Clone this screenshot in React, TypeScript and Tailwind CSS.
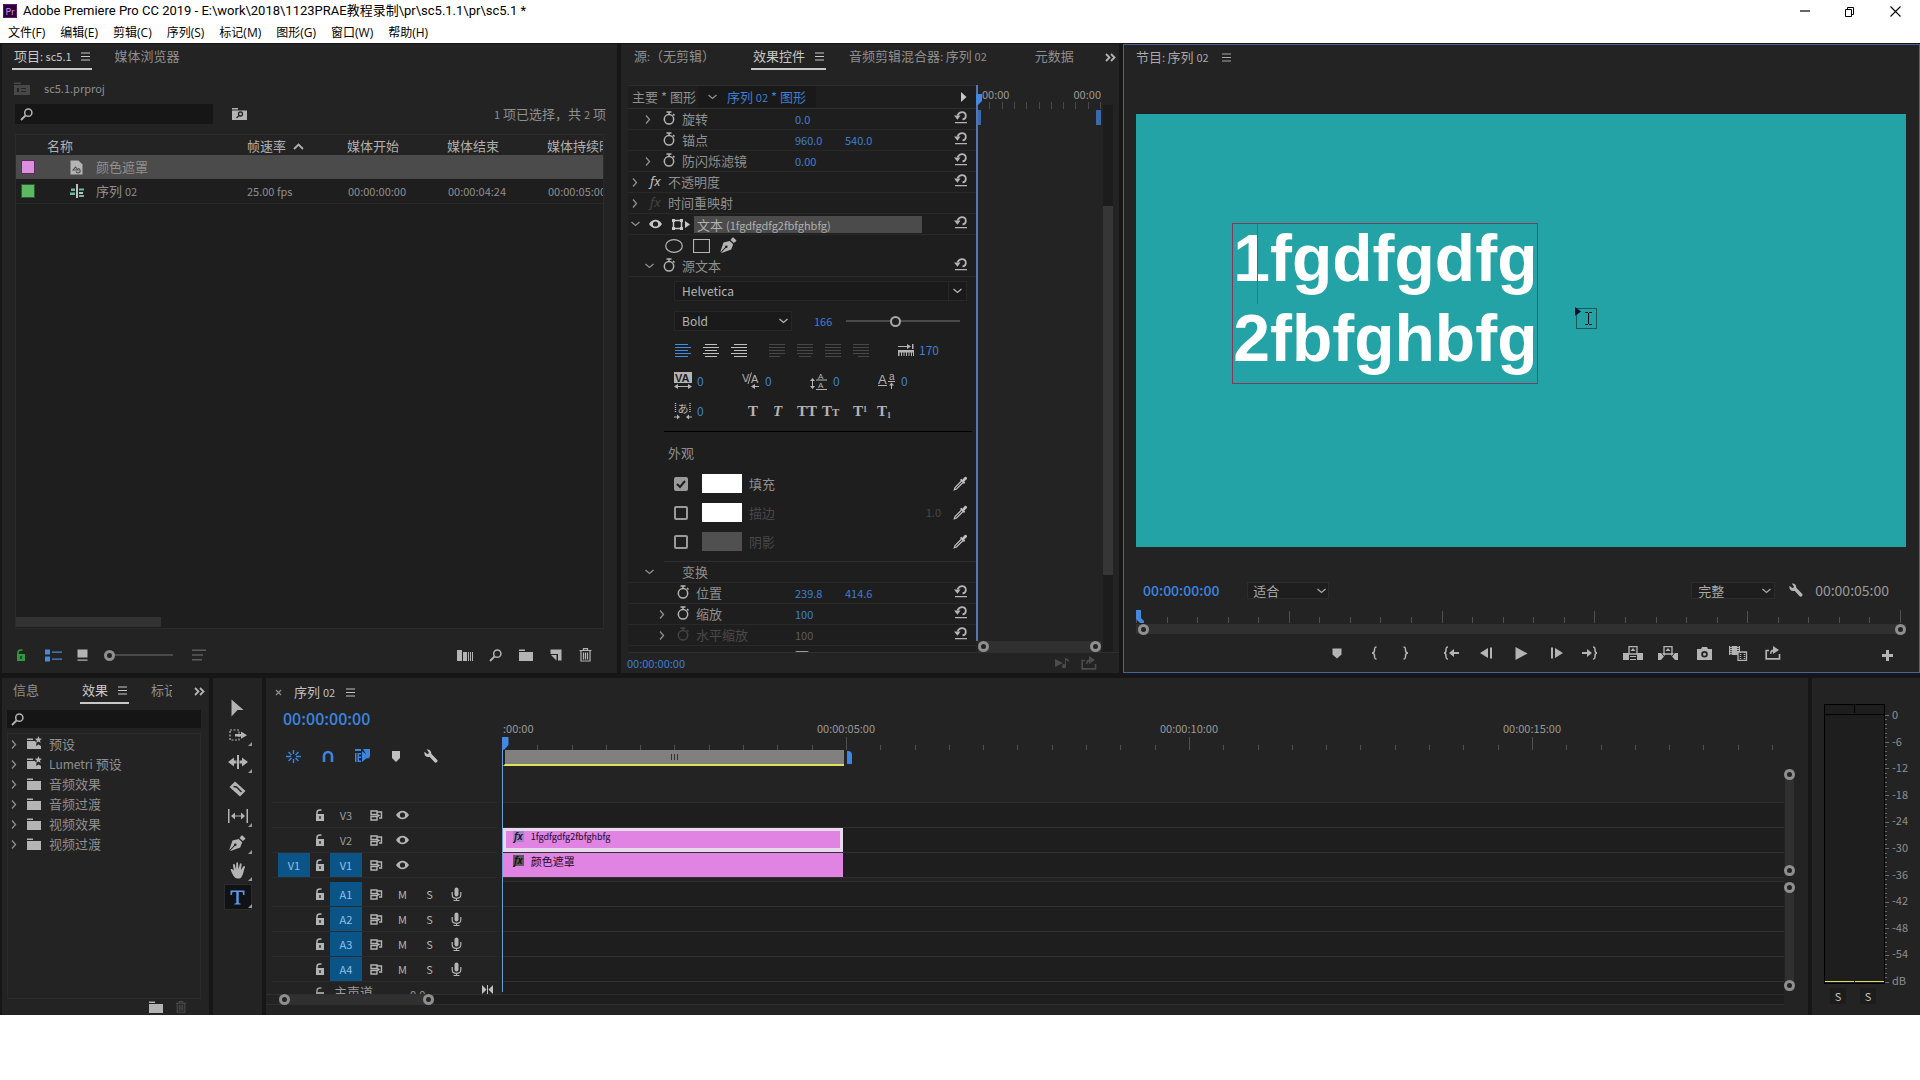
import React from "react";

type P = { className?: string };

/* ---------- icons ---------- */

const Svg = ({
  w,
  h,
  className = "",
  children,
  line,
}: {
  w: number;
  h: number;
  className?: string;
  children: React.ReactNode;
  line?: boolean;
}) => (
  <svg
    width={w}
    height={h}
    viewBox={`0 0 ${w} ${h}`}
    className={"shrink-0 " + className}
    fill={line ? "none" : "currentColor"}
    stroke={line ? "currentColor" : "none"}
    strokeWidth={1.5}
    aria-hidden="true"
  >
    {children}
  </svg>
);

const MenuLines = ({ className = "" }: P) => (
  <Svg w={9} h={9} className={className}>
    <path d="M0 0.5h9v1H0zM0 4h9v1H0zM0 7.5h9v1H0z" />
  </Svg>
);
const More = ({ className = "" }: P) => (
  <Svg w={11} h={9} line className={className}>
    <path d="M1 1l3.5 3.5L1 8M6 1l3.5 3.5L6 8" strokeWidth={1.8} />
  </Svg>
);
const Magnifier = ({ className = "" }: P) => (
  <Svg w={13} h={13} line className={className}>
    <circle cx="8.3" cy="4.7" r="3.6" />
    <path d="M5.5 7.5L1 12" strokeWidth={1.8} />
  </Svg>
);
const Folder = ({ className = "" }: P) => (
  <Svg w={14} h={12} className={className}>
    <path d="M0 0.5h6v1.5H0zM0 3h14v9H0z" />
  </Svg>
);
const FolderStar = ({ className = "" }: P) => (
  <Svg w={15} h={14} className={className}>
    <path d="M0 2.5h6V4H0zM0 5h8l1.5 2L9 10l2.6-1.6L14 10v3H0z" />
    <path d="M11.4 0l1 2.6 2.6.1-2.1 1.7.8 2.6-2.3-1.5L9.1 7l.8-2.6-2.1-1.7 2.7-.1z" />
  </Svg>
);
const ProjectFolder = ({ className = "" }: P) => (
  <Svg w={16} h={13} className={className}>
    <path d="M0 0.5h7V2H0z" />
    <path fillRule="evenodd" d="M0 3h16v10H0zM3 6v4h2V6zm4 0v1h5V6zm0 3v1h5V9z" />
  </Svg>
);
const FolderSearch = ({ className = "" }: P) => (
  <Svg w={15} h={12} className={className}>
    <path d="M0 0h6v1.5H0z" />
    <path d="M0 2.5h15V12H0z" />
    <circle cx="8.5" cy="6" r="2" fill="none" stroke="#232323" strokeWidth="1.3" />
    <path d="M7 7.5L4.5 10" stroke="#232323" strokeWidth="1.3" />
  </Svg>
);
const Right = ({ className = "" }: P) => (
  <Svg w={6} h={9} line className={className}>
    <path d="M1 0.5l3.5 4L1 8.5" strokeWidth={1.3} />
  </Svg>
);
const Down = ({ className = "" }: P) => (
  <Svg w={9} h={6} line className={className}>
    <path d="M0.5 1l4 3.5L8.5 1" strokeWidth={1.3} />
  </Svg>
);
const Lock = ({ className = "" }: P) => (
  <Svg w={9} h={12} className={className}>
    <path fillRule="evenodd" d="M1 5h8v7H1zM4.3 7v3h1.4V7z" />
    <path d="M2 6V3.5C2 1.5 3.5 1 5 1h1.5" fill="none" stroke="currentColor" strokeWidth="1.5" />
  </Svg>
);
const Stopwatch = ({ className = "" }: P) => (
  <Svg w={12} h={14} line className={className}>
    <circle cx="6" cy="8.3" r="4.7" />
    <path d="M3.5 1h5M6 1v2.5M10 3l1.5 1.5" />
  </Svg>
);
const ResetIcon = ({ className = "" }: P) => (
  <Svg w={13} h={13} className={className}>
    <path d="M3.5 4.5C4.500 2.200 6 1.200 8 1.200c2.300 0 3.800 1.600 3.800 3.700 0 2-1.300 3.300-3.300 3.500" fill="none" stroke="currentColor" strokeWidth="1.8" />
    <path d="M0 4.500h6.500L3.500 8.800zM1 11h12v1.200H1z" />
  </Svg>
);
const Eye = ({ className = "" }: P) => (
  <Svg w={13} h={10} className={className}>
    <path fillRule="evenodd" d="M0 5C2 1.8 4.2.7 6.5.7S11 1.8 13 5c-2 3.2-4.2 4.3-6.5 4.3S2 8.2 0 5zm6.5-2.6a2.6 2.6 0 100 5.2 2.6 2.6 0 000-5.2z" />
  </Svg>
);
const Sync = ({ className = "" }: P) => (
  <Svg w={13} h={11} line className={className}>
    <path d="M1 1h6v3.5H1zM1 6.500h6V10H1zM7 2h4.500v6H9M7 4.500l2 1-2 1" strokeWidth={1.4} />
  </Svg>
);
const Mic = ({ className = "" }: P) => (
  <Svg w={11} h={15} className={className}>
    <rect x="3.5" y="0.5" width="4" height="9" rx="2" />
    <path d="M1.2 5v3c0 2.2 1.8 3.3 4.3 3.3S9.8 10.2 9.8 8V5" fill="none" stroke="currentColor" strokeWidth="1.2" />
    <path d="M5 11h1v2.5H5zM2.5 13h6v1h-6z" />
  </Svg>
);
const Wrench = ({ className = "" }: P) => (
  <Svg w={15} h={15} className={className}>
    <path d="M1.5 2.8l2.6 2.2 1.4-.3.3-1.5L3.7.6C6 .1 8.500 1.500 8.300 4.700L14.300 11c1 1.300-1 3.400-2.400 2.400L6.500 7.800C3.500 8.800.7 6.500 1.500 2.800z" />
  </Svg>
);
const Marker = ({ className = "" }: P) => (
  <Svg w={10} h={11} className={className}>
    <path d="M0.5 0.5h9v6L5 10.5 0.5 6.5z" />
  </Svg>
);
const Pen = ({ className = "" }: P) => (
  <Svg w={17} h={17} className={className}>
    <path d="M10.500 3l1.800-2.300c.4-.4 1-.4 1.400 0l2.300 2.200c.5.500.4 1 0 1.400L13.800 6z" />
    <path fillRule="evenodd" d="M9.700 4l3.500 3.300-2 5.200L1.500 16l-.3-.3 4.600-4.800a1.300 1.300 0 10-.7-.7L.7 14.900.4 14.600 3.500 5.500z" />
  </Svg>
);
const Trash = ({ className = "" }: P) => (
  <Svg w={13} h={14} line className={className}>
    <path d="M0.5 2.5h12M4.5 2V.7h4V2M2 3v10h9V3M4.5 4.5v7M6.5 4.5v7M8.5 4.5v7" strokeWidth={1.2} />
  </Svg>
);
const Dropper = ({ className = "" }: P) => (
  <Svg w={15} h={15} className={className}>
    <path d="M7 4l1.200-1.200 1.200.900L11.500 1.200c1.300-1.300 3.400.6 2.200 2.100L11.300 5.600l.9 1.200L11 8z" />
    <path d="M8.500 5L2 11.500 1.300 13.800 3.500 13 10 6.500" fill="none" stroke="currentColor" strokeWidth="1.2" />
  </Svg>
);
const Export = ({ className = "" }: P) => (
  <Svg w={16} h={14} className={className}>
    <path d="M4 4.5H1.2v8.300h13.300V8" fill="none" stroke="currentColor" strokeWidth="1.7" />
    <path d="M8 0l6 4-6 4zM5 8c0-3 1-4.500 3-4.500v2C6.500 5.500 6.500 7 6.500 8z" />
  </Svg>
);

const Knob = ({ className = "" }: P) => (
  <span className={"block size-[11px] shrink-0 rounded-full border-[3px] border-[#8f8f8f] bg-[#232323] " + className} />
);

const IconButton = ({ label, className = "", children }: { label: string; className?: string; children: React.ReactNode }) => (
  <button type="button" aria-label={label} className={"flex shrink-0 items-center justify-center " + className}>
    {children}
  </button>
);

/* ---------- window chrome ---------- */

const menus = ["文件(F)", "编辑(E)", "剪辑(C)", "序列(S)", "标记(M)", "图形(G)", "窗口(W)", "帮助(H)"];

function TitleBar() {
  return (
    <header className="bg-white text-black">
      <div className="flex h-[22px] items-center pl-[3px]">
        <span className="flex size-[14px] items-center justify-center border border-[#5b1a6b] bg-[#2a0034] text-[9px] leading-none text-[#d58bff]">Pr</span>
        <h1 className="ml-[6px] whitespace-nowrap font-['Roboto','Noto_Sans_CJK_SC',sans-serif] text-[13px] leading-[22px]">
          Adobe Premiere Pro CC 2019 - E:\work\2018\1123PRAE教程录制\pr\sc5.1.1\pr\sc5.1 *
        </h1>
        <div className="ml-auto flex">
          <IconButton label="最小化" className="h-[22px] w-[45px]">
            <Svg w={10} h={10} line><path d="M0 5h10" strokeWidth={1.2} /></Svg>
          </IconButton>
          <IconButton label="还原" className="h-[22px] w-[45px]">
            <Svg w={11} h={11} line><path d="M1.500 3.500h6v7h-6zM3.500 3V1.500h6v7H8" strokeWidth={1} /></Svg>
          </IconButton>
          <IconButton label="关闭" className="mr-[2px] h-[22px] w-[46px]">
            <Svg w={11} h={11} line><path d="M0.5 0.5l10 10M10.5 0.5l-10 10" strokeWidth={1.1} /></Svg>
          </IconButton>
        </div>
      </div>
      <nav className="flex h-[21px] gap-[15px] pl-[8px] font-['Open_Sans','Noto_Sans_CJK_SC',sans-serif] text-[12px] leading-[20px]">
        {menus.map((m) => (
          <button key={m} type="button" className="whitespace-nowrap">{m}</button>
        ))}
      </nav>
    </header>
  );
}

const Tab = ({ active, children, className = "" }: { active?: boolean; children: React.ReactNode; className?: string }) => (
  <button
    type="button"
    className={
      "flex h-[26px] shrink-0 items-center whitespace-nowrap border-b-2 text-[13px] " +
      (active ? "border-[#c8c8c8] text-[#c8c8c8] " : "border-transparent text-[#8f8f8f] ") +
      className
    }
  >
    {children}
  </button>
);
const Sm = ({ children }: { children: React.ReactNode }) => <span className="text-[11px]">{children}</span>;

/* ---------- project ---------- */

const th = "p-0 text-left font-normal whitespace-nowrap overflow-hidden";

function ProjectPanel() {
  return (
    <section className="flex min-w-0 flex-col bg-[#232323]">
      <div className="flex pl-[10px]">
        <Tab active className="px-[2px]">
          项目<Sm>: sc5.1</Sm>
          <MenuLines className="ml-[9px]" />
        </Tab>
        <Tab className="ml-[23px]">媒体浏览器</Tab>
      </div>
      <div className="mt-[8px] flex h-[20px] items-center pl-[12px]">
        <ProjectFolder className="text-[#484848]" />
        <span className="ml-[14px] text-[11px] text-[#8f8f8f]">sc5.1.prproj</span>
      </div>
      <div className="mt-[6px] flex h-[20px] items-center pr-[11px] pl-[13px]">
        <label className="flex h-[20px] w-[198px] items-center bg-[#161616] pl-[5px] text-[#b4b4b4]">
          <Magnifier />
          <input aria-label="搜索项目" className="ml-1 w-full bg-transparent text-[12px] outline-none" />
        </label>
        <IconButton label="从查询创建新的搜索素材箱" className="ml-[19px] text-[#b4b4b4]"><FolderSearch /></IconButton>
        <span className="ml-auto text-[13px] text-[#8f8f8f]"><Sm>1</Sm> 项已选择，共 <Sm>2</Sm> 项</span>
      </div>
      <div className="mx-[13px] mt-[10px] flex h-0 grow flex-col overflow-hidden border border-[#2b2b2b] bg-[#1e1e1e]">
        <table className="w-full table-fixed border-collapse">
          <colgroup>
            <col className="w-[31px]" />
            <col />
            <col className="w-[100px]" />
            <col className="w-[100px]" />
            <col className="w-[100px]" />
            <col className="w-[56px]" />
          </colgroup>
          <thead className="bg-[#232323] text-[13px] text-[#b0b0b0]">
            <tr className="h-[20px] leading-[19px]">
              <th className={th} />
              <th className={th}>名称</th>
              <th className={th}>
                帧速率
                <Svg w={11} h={7} line className="ml-[7px] inline"><path d="M1 6l4.5-4.5L10 6" strokeWidth={1.8} /></Svg>
              </th>
              <th className={th}>媒体开始</th>
              <th className={th}>媒体结束</th>
              <th className={th}>媒体持续时间</th>
            </tr>
          </thead>
          <tbody className="text-[11px] text-[#8f8f8f]">
            <tr className="h-[24px] bg-[#4b4b4b]">
              <td className="p-0 pl-[5px]"><span className="block size-[14px] border border-[#5c2a5c] bg-[#dc8fdd]" /></td>
              <td className="p-0">
                <span className="flex items-center pl-[23px] text-[13px]">
                  <Svg w={13} h={15} className="text-[#b4b4b4]">
                    <path d="M0.5 0.5h8l4 4v10h-12z" />
                    <path d="M3 10l2.5-3L8 10H3zM6 11.500a2 2 0 104-1.500 2 2 0 00-2-1.500" fill="none" stroke="#4b4b4b" strokeWidth="1.1" />
                  </Svg>
                  <span className="ml-[13px]">颜色遮罩</span>
                </span>
              </td>
              <td className="p-0" colSpan={4} />
            </tr>
            <tr className="h-[24px] border-b border-[#282828]">
              <td className="p-0 pl-[5px]"><span className="block size-[14px] border border-[#2c5a30] bg-[#5cb862]" /></td>
              <td className="p-0">
                <span className="flex items-center pl-[23px] text-[13px]">
                  <Svg w={14} h={14}>
                    <path d="M6 0h2v14H6z" fill="#c0c0c0" />
                    <path d="M1 4.500h4v2.500H1zM0 8.500h5v2.500H0z" fill="#6fb9a4" />
                    <path d="M9 4.500h5v2H9zM9 11h5v2H9z" fill="#6fb9a4" />
                    <path d="M9 8h4v2H9z" fill="#c0c0c0" />
                  </Svg>
                  <span className="ml-[12px]">序列 <Sm>02</Sm></span>
                </span>
              </td>
              <td className="p-0">25.00 fps</td>
              <td className="p-0 pl-px">00:00:00:00</td>
              <td className="p-0 pl-px">00:00:04:24</td>
              <td className="overflow-hidden p-0 pl-px">00:00:05:00</td>
            </tr>
          </tbody>
        </table>
        <div className="mt-auto mb-px h-[10px] w-[145px] bg-[#323232]" />
      </div>
      <div className="flex h-[44px] items-center pt-[8px] pr-[25px] pl-[14px] text-[#b4b4b4]">
        <IconButton label="锁定" className="text-[#2f9a3c]"><Lock /></IconButton>
        <IconButton label="列表视图" className="ml-[20px] text-[#4a88d8]">
          <Svg w={17} h={13}><path d="M0 0.5h5v5H0zM0 7.5h5v5H0zM7 2.5h10v1.2H7zM7 9.5h10v1.2H7z" /></Svg>
        </IconButton>
        <IconButton label="图标视图" className="ml-[15px]">
          <Svg w={11} h={12}><path d="M0.5 0.5h10v8h-10zM0.5 10.5h10v1.2h-10z" /></Svg>
        </IconButton>
        <input
          type="range"
          aria-label="缩放"
          defaultValue={0}
          className="ml-[16px] h-[12px] w-[69px] appearance-none bg-[linear-gradient(#4a4a4a,#4a4a4a)] bg-[length:100%_2px] bg-center bg-no-repeat [&::-webkit-slider-thumb]:size-[11px] [&::-webkit-slider-thumb]:appearance-none [&::-webkit-slider-thumb]:rounded-full [&::-webkit-slider-thumb]:border-[3px] [&::-webkit-slider-thumb]:border-solid [&::-webkit-slider-thumb]:border-[#8f8f8f] [&::-webkit-slider-thumb]:bg-[#232323]"
        />
        <IconButton label="排序图标" className="ml-[19px] text-[#5c5c5c]">
          <Svg w={14} h={12}><path d="M0 0.5h14V2H0zM0 5.2h11v1.5H0zM0 10h10v1.5H0z" /></Svg>
        </IconButton>
        <IconButton label="自动匹配序列" className="ml-auto">
          <Svg w={16} h={11}><path d="M0 0h5v11H0zM6 2h4v9H6zM11 2h1v9h-1zM13 2h1v9h-1zM15 2h1v9h-1z" /></Svg>
        </IconButton>
        <IconButton label="查找" className="ml-[16px]"><Magnifier /></IconButton>
        <IconButton label="新建素材箱" className="ml-[17px]"><Folder /></IconButton>
        <IconButton label="新建项" className="ml-[17px]">
          <Svg w={12} h={12}><path d="M0.5 0.5h11v11H8V5H0.5zM1 6h5.5v5.5z" /></Svg>
        </IconButton>
        <IconButton label="清除" className="ml-[17px]"><Trash /></IconButton>
      </div>
    </section>
  );
}

/* ---------- effect controls ---------- */

const hot = "w-[50px] shrink-0 text-left text-[11px] text-[#3f7fd0]";

function PropRow({
  level,
  chevron,
  label,
  values = [],
  dim,
}: {
  level: 2 | 3;
  chevron?: "r" | "d";
  label: string;
  values?: string[];
  dim?: boolean;
}) {
  const lead = level === 2 ? "w-[17px]" : "w-[31px]";
  return (
    <div className="flex h-[21px] shrink-0 items-center border-b border-[#292929] text-[13px] text-[#8f8f8f]">
      <div className="flex w-[167px] shrink-0 items-center whitespace-nowrap">
        <span className={"shrink-0 " + lead} />
        <span className="w-[18px] shrink-0">{chevron === "r" ? <Right /> : chevron === "d" ? <Down /> : null}</span>
        <Stopwatch className={"mb-[2px] " + (dim ? "text-[#444]" : "text-[#b4b4b4]")} />
        <span className={"ml-[7px] " + (dim ? "text-[#4a4a4a]" : "")}>{label}</span>
      </div>
      {values.map((v) => (
        <button key={v} type="button" className={dim ? "w-[50px] text-left text-[11px] text-[#5c5c5c]" : hot}>{v}</button>
      ))}
      <IconButton label={"重置" + label} className="mr-[9px] mb-[4px] ml-auto text-[#b4b4b4]"><ResetIcon /></IconButton>
    </div>
  );
}

const alignSets: { name: string; d: string; cls: string }[] = [
  { name: "左对齐", d: "M0 0h13v1H0zM0 3h16v1H0zM0 6h13v1H0zM0 9h16v1H0zM0 12h13v1H0z", cls: "text-[#3f8fe8]" },
  { name: "居中对齐", d: "M2 0h12v1H2zM0 3h16v1H0zM2 6h12v1H2zM0 9h16v1H0zM2 12h12v1H2z", cls: "text-[#c0c0c0] ml-[12px]" },
  { name: "右对齐", d: "M3 0h13v1H3zM0 3h16v1H0zM3 6h13v1H3zM0 9h16v1H0zM3 12h13v1H3z", cls: "text-[#c0c0c0] ml-[12px]" },
  { name: "最后一行左对齐", d: "M0 0h16v1H0zM0 3h16v1H0zM0 6h16v1H0zM0 9h16v1H0zM0 12h11v1H0z", cls: "text-[#484848] ml-[22px]" },
  { name: "最后一行居中对齐", d: "M0 0h16v1H0zM0 3h16v1H0zM0 6h16v1H0zM0 9h16v1H0zM2 12h12v1H2z", cls: "text-[#484848] ml-[12px]" },
  { name: "全部对齐", d: "M0 0h16v1H0zM0 3h16v1H0zM0 6h16v1H0zM0 9h16v1H0zM0 12h16v1H0z", cls: "text-[#484848] ml-[12px]" },
  { name: "最后一行右对齐", d: "M0 0h16v1H0zM0 3h16v1H0zM0 6h16v1H0zM0 9h16v1H0zM5 12h11v1H5z", cls: "text-[#484848] ml-[12px]" },
];

const MiniText = ({ x, y, s, children, fill = "currentColor", bold }: { x: number; y: number; s: number; children: string; fill?: string; bold?: boolean }) => (
  <text x={x} y={y} fontSize={s} fill={fill} fontWeight={bold ? 700 : 400} fontFamily="Liberation Sans, Noto Sans CJK SC, sans-serif">{children}</text>
);

const spacing = [
  {
    name: "字距调整",
    icon: (
      <Svg w={18} h={18}>
        <path d="M0 0h18v11H0z" />
        <MiniText x={1} y={9.5} s={11} fill="#1e1e1e" bold>VA</MiniText>
        <path d="M0 14.5L4 12v2h10v-2l4 2.5-4 2.5v-2H4v2z" />
      </Svg>
    ),
  },
  {
    name: "字偶间距",
    icon: (
      <Svg w={18} h={18}>
        <MiniText x={0} y={10} s={11}>V</MiniText>
        <MiniText x={9} y={10.5} s={11}>A</MiniText>
        <path d="M9.5 0.5L6 12" stroke="currentColor" strokeWidth="1" />
        <path d="M9 14.5l4-2.5v2h4v1h-4v2z" />
      </Svg>
    ),
  },
  {
    name: "行距",
    icon: (
      <Svg w={18} h={18}>
        <MiniText x={8} y={6.5} s={8}>A</MiniText>
        <MiniText x={8} y={15.5} s={8}>A</MiniText>
        <path d="M6 7.5h11v1H6zM6 17h11v1H6zM2.5 6L5 9H3v5h2l-2.5 3L0 14h2V9H0z" />
      </Svg>
    ),
  },
  {
    name: "基线位移",
    icon: (
      <Svg w={18} h={18}>
        <MiniText x={0} y={12} s={13}>A</MiniText>
        <MiniText x={11} y={8} s={10}>a</MiniText>
        <path d="M0 13h9v1H0zM10 9h7v1h-7zM13.5 10.5l2.5 3h-2V17h-1v-3.5h-2z" />
      </Svg>
    ),
  },
];

function FillRow({ label, swatch, checked, dim, value }: { label: string; swatch: string; checked?: boolean; dim?: boolean; value?: string }) {
  return (
    <div className="flex h-[29px] shrink-0 items-center pr-[8px] pl-[46px] text-[13px]">
      <label className="flex items-center">
        <span className="relative flex size-[14px]">
          <input
            type="checkbox"
            defaultChecked={checked}
            className="size-[14px] appearance-none rounded-[2px] border-2 border-[#9a9a9a] checked:bg-[#9a9a9a]"
          />
          {checked && (
            <Svg w={14} h={14} line className="pointer-events-none absolute inset-0 text-[#1e1e1e]">
              <path d="M3 7l3 3 5-6" strokeWidth={2} />
            </Svg>
          )}
        </span>
        <span className={"ml-[14px] h-[19px] w-[40px] " + swatch} />
        <span className={"ml-[7px] " + (dim ? "text-[#484848]" : "text-[#8f8f8f]")}>{label}</span>
      </label>
      <span className="mr-[12px] ml-auto text-[11px] text-[#484848]">{value}</span>
      <IconButton label={"吸管" + label} className="text-[#c0c0c0]"><Dropper /></IconButton>
    </div>
  );
}

function EffectControls() {
  return (
    <section className="flex min-w-0 flex-col bg-[#232323]">
      <div className="flex items-center pr-[3px] pl-[13px]">
        <Tab>源<Sm>:</Sm>（无剪辑）</Tab>
        <Tab active className="ml-[36px] px-[2px]">效果控件<MenuLines className="ml-[10px]" /></Tab>
        <Tab className="ml-[23px]">音频剪辑混合器<Sm>:&nbsp;</Sm>序列&nbsp;<Sm>02</Sm></Tab>
        <Tab className="ml-[48px]">元数据</Tab>
        <IconButton label="更多面板" className="ml-auto text-[#b4b4b4]"><More /></IconButton>
      </div>
      <div className="mt-[15px] ml-[7px] flex h-0 grow overflow-hidden border-b border-[#2e2e2e] bg-[#1e1e1e]">
        <div className="flex min-w-0 flex-[348] flex-col overflow-hidden border-t border-[#2e2e2e]">
          <div className="flex h-[23px] shrink-0 items-center border-b border-[#2e2e2e] pb-px pl-[4px] text-[13px] text-[#8f8f8f]">
            主要&nbsp;*&nbsp;图形
            <span className="ml-[2px] flex h-full items-center bg-[#191919] px-[10px]">
              <Down />
              <span className="ml-[10px] whitespace-nowrap text-[#3f7fd0]">序列&nbsp;<Sm>02</Sm>&nbsp;*&nbsp;图形</span>
            </span>
            <IconButton label="显示时间轴" className="mr-[9px] ml-auto text-[#c8c8c8]">
              <Svg w={6} h={10}><path d="M0 0l5.5 5L0 10z" /></Svg>
            </IconButton>
          </div>
          <PropRow level={2} chevron="r" label="旋转" values={["0.0"]} />
          <PropRow level={2} label="锚点" values={["960.0", "540.0"]} />
          <PropRow level={2} chevron="r" label="防闪烁滤镜" values={["0.00"]} />
          <div className="flex h-[21px] shrink-0 items-center border-b border-[#292929] pl-[4px] text-[13px] text-[#8f8f8f]">
            <Right />
            <i className="ml-[12px] w-[18px] font-['Noto_Sans'] text-[#c0c0c0]">fx</i>不透明度
            <IconButton label="重置不透明度" className="mr-[9px] mb-[4px] ml-auto text-[#b4b4b4]"><ResetIcon /></IconButton>
          </div>
          <div className="flex h-[21px] shrink-0 items-center border-b border-[#292929] pl-[4px] text-[13px] text-[#8f8f8f]">
            <Right />
            <i className="ml-[12px] w-[18px] font-['Noto_Sans'] text-[#444]">fx</i>时间重映射
          </div>
          <div className="flex h-[21px] shrink-0 items-center border-b border-[#292929] pl-[3px] text-[13px]">
            <Down className="text-[#8f8f8f]" />
            <Eye className="ml-[9px] text-[#c8c8c8]" />
            <Svg w={20} h={13} className="ml-[9px] text-[#c8c8c8]">
              <path d="M2 2.500h9M2 10.500h9M2.500 2v9M10.500 2v9" fill="none" stroke="currentColor" />
              <path d="M1 1h3v3H1zM9 1h3v3H9zM1 9h3v3H1zM9 9h3v3H9z" />
              <path d="M14 3l5 3.500-5 3.500z" />
            </Svg>
            <span className="ml-[3px] h-[17px] w-[228px] bg-[#4b4b4b] pl-[3px] leading-[17px] whitespace-nowrap text-[#b0b0b0]">
              文本&nbsp;<Sm>(1fgdfgdfg2fbfghbfg)</Sm>
            </span>
            <IconButton label="重置文本" className="mr-[9px] mb-[4px] ml-auto text-[#b4b4b4]"><ResetIcon /></IconButton>
          </div>
          <div className="flex h-[21px] shrink-0 items-center pl-[37px] text-[#b4b4b4]">
            <IconButton label="椭圆形蒙版"><Svg w={18} h={14} line><ellipse cx="9" cy="7" rx="8.3" ry="6.3" strokeWidth={1.2} /></Svg></IconButton>
            <IconButton label="矩形蒙版" className="ml-[10px]"><Svg w={17} h={14} line><path d="M0.5 0.5h16v13h-16z" strokeWidth={1.2} /></Svg></IconButton>
            <IconButton label="钢笔蒙版" className="ml-[10px]"><Pen /></IconButton>
          </div>
          <PropRow level={2} chevron="d" label="源文本" />
          <div className="relative mt-[4px] mr-[9px] ml-[46px] shrink-0 text-[#b4b4b4]">
            <select aria-label="字体" className="block h-[20px] w-full appearance-none border border-[#272727] bg-[#1a1a1a] pl-[7px] text-[12px] leading-[18px]">
              <option>Helvetica</option>
            </select>
            <Down className="pointer-events-none absolute top-[7px] right-[5px]" />
            <span className="pointer-events-none absolute top-0 right-[18px] h-[20px] w-px bg-[#272727]" />
          </div>
          <div className="mt-[10px] flex h-[20px] shrink-0 items-center pr-[16px] pl-[46px] text-[#b4b4b4]">
            <div className="relative w-[118px]">
              <select aria-label="字体样式" className="block h-[20px] w-full appearance-none border border-[#272727] bg-[#1a1a1a] pl-[7px] text-[12px] leading-[18px]">
                <option>Bold</option>
              </select>
              <Down className="pointer-events-none absolute top-[7px] right-[4px]" />
            </div>
            <button type="button" className="ml-[22px] w-[32px] text-left text-[11px] text-[#3f7fd0]">166</button>
            <input
              type="range"
              aria-label="字体大小"
              defaultValue={43}
              className="h-[12px] w-0 grow appearance-none bg-[linear-gradient(#4a4a4a,#4a4a4a)] bg-[length:100%_2px] bg-center bg-no-repeat [&::-webkit-slider-thumb]:size-[11px] [&::-webkit-slider-thumb]:appearance-none [&::-webkit-slider-thumb]:rounded-full [&::-webkit-slider-thumb]:border-[2px] [&::-webkit-slider-thumb]:border-solid [&::-webkit-slider-thumb]:border-[#a8a8a8] [&::-webkit-slider-thumb]:bg-[#1e1e1e]"
            />
          </div>
          <div className="mt-[9px] flex h-[20px] shrink-0 items-center pl-[47px]">
            {alignSets.map((a) => (
              <IconButton key={a.name} label={a.name} className={a.cls}><Svg w={16} h={13}><path d={a.d} /></Svg></IconButton>
            ))}
            <Svg w={16} h={12} className="ml-[29px] text-[#b4b4b4]">
              <path d="M0 2h9V0l4 2.5L9 5V3H0zM14 0h1.5v5H14z" />
              <path d="M0 6h16v6h-1V8.5h-1V12h-1V8.5h-1.5V12h-1V8.5H9V12H8V8.5H6.5V12h-1V8.5H4V12H3V8.5H1.5V12H0z" />
            </Svg>
            <button type="button" className="ml-[5px] text-[12px] text-[#3f7fd0]">170</button>
          </div>
          <div className="mt-[11px] flex h-[20px] shrink-0 items-center pl-[46px] text-[#b4b4b4]">
            {spacing.map((s) => (
              <div key={s.name} className="flex w-[68px] items-center">
                {s.icon}
                <button type="button" aria-label={s.name} className="ml-[5px] text-[12px] text-[#3f7fd0]">0</button>
              </div>
            ))}
          </div>
          <div className="mt-[10px] flex h-[20px] shrink-0 items-center pl-[46px] text-[#b4b4b4]">
            <div className="flex w-[68px] items-center">
              <Svg w={18} h={18}>
                <MiniText x={3.5} y={10.5} s={11}>あ</MiniText>
                <path d="M1.5 1v10M16 1v10" stroke="currentColor" strokeDasharray="1 1" />
                <path d="M0 14.5h3v-2l3 2.5-3 2.5v-2H0zM18 14.5h-3v-2L12 15l3 2.5v-2h3z" />
              </Svg>
              <button type="button" aria-label="比例间距" className="ml-[5px] text-[12px] text-[#3f7fd0]">0</button>
            </div>
            <div className="flex grow items-center font-['Liberation_Serif',serif] text-[15px] leading-none">
              <button type="button" className="w-[31px] pl-[6px] text-left font-bold">T</button>
              <button type="button" className="w-[24px] text-left font-bold italic">T</button>
              <button type="button" className="w-[25px] text-left font-bold">TT</button>
              <button type="button" className="w-[31px] text-left font-bold">T<span className="text-[11px]">T</span></button>
              <button type="button" className="w-[24px] text-left font-bold">T<sup className="text-[8px]">1</sup></button>
              <button type="button" className="text-left font-bold">T<sub className="text-[8px]">1</sub></button>
            </div>
          </div>
          <div className="mt-[10px] mr-[4px] ml-[36px] h-px shrink-0 bg-black" />
          <h2 className="mt-[11px] h-[20px] shrink-0 pl-[40px] text-[13px] leading-[20px] text-[#8f8f8f]">外观</h2>
          <div className="mt-[6px]" />
          <FillRow label="填充" swatch="bg-white" checked />
          <FillRow label="描边" swatch="bg-white" dim value="1.0" />
          <FillRow label="阴影" swatch="bg-[#505050]" dim />
          <div className="mt-[5px] ml-[36px] h-px shrink-0 bg-[#2e2e2e]" />
          <div className="flex h-[21px] shrink-0 items-center border-b border-[#292929] pl-[17px] text-[13px] text-[#8f8f8f]">
            <Down />
            <span className="ml-[28px]">变换</span>
          </div>
          <PropRow level={3} label="位置" values={["239.8", "414.6"]} />
          <PropRow level={3} chevron="r" label="缩放" values={["100"]} />
          <PropRow level={3} chevron="r" label="水平缩放" values={["100"]} dim />
          <div className="flex h-[21px] shrink-0 items-center pt-[3px] pr-[9px] pl-[167px] text-[13px] text-[#8f8f8f]">
            <label className="flex items-center">
              <input type="checkbox" defaultChecked className="size-[14px] appearance-none rounded-[2px] bg-[#9a9a9a]" />
              <span className="ml-[5px]">等比缩放</span>
            </label>
            <ResetIcon className="ml-auto text-[#b4b4b4]" />
          </div>
        </div>
        <div className="flex min-w-0 flex-[125] flex-col bg-[#232323]">
          <div className="relative flex grow flex-col border-l-2 border-[#5576b4]">
            <div className="flex h-[16px] items-end justify-between pl-[4px] text-[11px] leading-[14px] text-[#9a9a9a]">
              <span>00:00</span>
              <span>00:00</span>
            </div>
            <div className="grid h-[8px] grid-cols-10 overflow-hidden">
              {Array.from({ length: 10 }, (_, i) => <span key={i} className="mt-[1px] border-r border-[#4a4a4a]" />)}
            </div>
            <Svg w={8} h={11} className="absolute top-[9px] left-[-2px] text-[#4488e0]"><path d="M0 0h6v7l-4 4H0z" /></Svg>
            <div className="mt-px flex h-[15px] justify-between">
              <span className="w-[3px] bg-[#3a69ac]" />
              <span className="w-[5px] bg-[#3a69ac]" />
            </div>
          </div>
          <div className="ml-[2px] flex h-[11px] items-center justify-between bg-[#303030]"><Knob /><Knob /></div>
        </div>
        <div className="flex w-[18px] shrink-0 flex-col bg-[#232323] pr-[6px] pl-[2px]">
          <div className="mt-[20px] h-[101px] bg-[#1c1c1c]" />
          <div className="h-[369px] bg-[#363636]" />
          <div className="grow bg-[#1c1c1c]" />
        </div>
      </div>
      <div className="flex h-[20px] shrink-0 items-center pr-[22px] pl-[6px] text-[#4c4c4c]">
        <span className="text-[11px] leading-[20px] text-[#3f7fd0]">00:00:00:00</span>
        <IconButton label="仅播放该剪辑的音频" className="ml-auto">
          <Svg w={15} h={12}><path d="M0 2l8 4-8 4zM10 1h1v8a2 2 0 11-1-1.500zM11 1l3 2v2l-3-2z" /></Svg>
        </IconButton>
        <IconButton label="导出" className="ml-[11px]"><Export /></IconButton>
      </div>
    </section>
  );
}

/* ---------- program monitor ---------- */

const transport: { name: string; gap: string; icon: React.ReactNode }[] = [
  { name: "添加标记", gap: "", icon: <Marker /> },
  { name: "标记入点", gap: "ml-[7px]", icon: <Svg w={6} h={14} line><path d="M5.500 1C3.500 1 3.500 2 3.500 4S3 7 1 7c2 0 2.500 1 2.500 3s0 3 2 3" /></Svg> },
  { name: "标记出点", gap: "ml-[2px]", icon: <Svg w={6} h={14} line><path d="M0.500 1c2 0 2 1 2 3S3 7 5 7c-2 0-2.500 1-2.500 3s0 3-2 3" /></Svg> },
  { name: "转到入点", gap: "ml-[15px]", icon: <Svg w={16} h={14}><path d="M5 1C3 1 3 2 3 4S2.500 7 1 7c1.500 0 2 1 2 3s0 3 2 3" fill="none" stroke="currentColor" strokeWidth="1.5" /><path d="M6 7l5-4v3h5v2h-5v3z" /></Svg> },
  { name: "后退一帧", gap: "ml-[5px]", icon: <Svg w={13} h={12}><path d="M0 6l8-5v10zM10 0.5h2v11h-2z" /></Svg> },
  { name: "播放", gap: "ml-[5px]", icon: <Svg w={13} h={13}><path d="M0.5 0l12 6.5L0.5 13z" /></Svg> },
  { name: "前进一帧", gap: "ml-[5px]", icon: <Svg w={13} h={12}><path d="M13 6L5 1v10zM1 0.5h2v11H1z" /></Svg> },
  { name: "转到出点", gap: "ml-[4px]", icon: <Svg w={16} h={14}><path d="M11 1c2 0 2 1 2 3s.5 3 2 3c-1.500 0-2 1-2 3s0 3-2 3" fill="none" stroke="currentColor" strokeWidth="1.5" /><path d="M10 7L5 3v3H0v2h5v3z" /></Svg> },
  { name: "提升", gap: "ml-[13px]", icon: <Svg w={20} h={14}><path d="M0 7h6v7H0zM14 7h6v7h-6zM7 10h6v1H7zM7 13h6v1H7z" /><path d="M6 .7h8V8H6z" fill="none" stroke="currentColor" strokeWidth="1.3" /><path d="M10 2l2.500 3h-5z" /></Svg> },
  { name: "提取", gap: "ml-[5px]", icon: <Svg w={20} h={14}><path d="M0 7h3l3 3.500L3 14H0zM20 7h-3l-3 3.500 3 3.500h3zM4 7h3v3zM16 7h-3v3z" /><path d="M6 .7h8V8H6z" fill="none" stroke="currentColor" strokeWidth="1.3" /><path d="M10 2l2.500 3h-5z" /></Svg> },
  { name: "导出帧", gap: "ml-[6px]", icon: <Svg w={15} h={13}><path fillRule="evenodd" d="M4 2l1-2h5l1 2h4v11H0V2zm3.500 2a3.300 3.300 0 100 6.600 3.300 3.300 0 000-6.600z" /><circle cx="7.5" cy="7.3" r="1.5" /></Svg> },
  { name: "比较视图", gap: "ml-[4px]", icon: <Svg w={19} h={15}><path d="M0 0h11v9H0z" /><path d="M9 6h8.500v8.300H9z" fill="#232323" stroke="currentColor" strokeWidth="1.3" /><path d="M11.500 6v8M15.500 6v8" stroke="currentColor" strokeDasharray="1 1" /><path d="M2 0v9M9 0v6" stroke="#232323" strokeDasharray="1 1" /></Svg> },
  { name: "导出", gap: "ml-[5px]", icon: <Export /> },
];

function ProgramMonitor() {
  return (
    <section className="flex min-w-0 flex-col border border-[#44659c] bg-[#232323] pr-[13px] pb-[7px] pl-[12px]">
      <div className="flex h-[24px] items-center text-[13px] text-[#a8a8a8]">
        节目<Sm>:&nbsp;</Sm>序列&nbsp;<Sm>02</Sm>
        <MenuLines className="ml-[13px]" />
      </div>
      <div className="relative mt-[45px] aspect-[770/433] bg-[#24a3a7]">
        <div className="absolute top-[25.2%] left-[12.5%] flex flex-col gap-[11px] border border-[#84385a] pb-[10px] font-['Liberation_Sans',Arial,sans-serif] text-[66px] leading-[69px] font-bold whitespace-nowrap text-white">
          <div>1fgdfgdfg</div>
          <div>2fbfghbfg</div>
          <span className="absolute top-0 left-[24px] h-[80px] w-px bg-[#a04466]" />
        </div>
        <svg width="23" height="23" viewBox="0 0 23 23" className="absolute top-[44.5%] left-[57%]" aria-hidden="true">
          <path d="M1.500 1.500h20v20h-20z" fill="none" stroke="#111" strokeDasharray="1 1" />
          <path d="M0 0l6 4.500L0 9z" fill="#0a1030" />
          <path d="M10 5.500h3M14 5.500h3M13.500 6v11M10 17.500h3M14 17.500h3" stroke="#111" fill="none" />
        </svg>
      </div>
      <div className="mt-[33px] flex h-[20px] items-center pr-[17px] pl-[7px] text-[#a8a8a8]">
        <span className="text-[14px] font-medium text-[#3b86e0]">00:00:00:00</span>
        <div className="relative ml-[28px]">
          <select aria-label="缩放级别" className="block h-[17px] w-[82px] appearance-none border border-[#2c2c2c] bg-[#1e1e1e] pl-[5px] text-[13px] leading-[15px]">
            <option>适合</option>
          </select>
          <Down className="pointer-events-none absolute top-[6px] right-[3px]" />
        </div>
        <div className="relative ml-auto">
          <select aria-label="回放分辨率" className="block h-[17px] w-[84px] appearance-none border border-[#2c2c2c] bg-[#1e1e1e] pl-[6px] text-[13px] leading-[15px]">
            <option>完整</option>
          </select>
          <Down className="pointer-events-none absolute top-[6px] right-[4px]" />
        </div>
        <IconButton label="设置" className="mr-[12px] ml-[13px] text-[#b4b4b4]"><Wrench /></IconButton>
        <span className="text-[14px] text-[#9a9a9a]">00:00:05:00</span>
      </div>
      <div className="relative mt-[10px] h-[14px] pr-[5px]">
        <div className="grid h-[13px] grid-cols-[repeat(25,minmax(0,1fr))] items-end border-r border-[#505050]">
          {Array.from({ length: 25 }, (_, i) => (
            <span key={i} className={(i % 5 === 0 ? "h-[12px]" : "h-[6px]") + " border-l border-[#505050]"} />
          ))}
        </div>
        <Svg w={8} h={13} className="absolute top-0 left-0 text-[#4488e0]"><path d="M0 0h5v8l3 3v2H4L0 9z" /></Svg>
      </div>
      <div className="flex h-[10px] items-center justify-between bg-[#303030] pl-[2px]"><Knob /><Knob /></div>
      <div className="mt-[7px] flex h-[24px] items-center pr-[12px] pl-[186px] text-[#b4b4b4]">
        {transport.map((t) => (
          <IconButton key={t.name} label={t.name} className={"w-[30px] " + t.gap}>{t.icon}</IconButton>
        ))}
        <IconButton label="按钮编辑器" className="mt-[4px] ml-auto"><Svg w={13} h={13}><path d="M5 1h3v4h4v3H8v4H5V8H1V5h4z" /></Svg></IconButton>
      </div>
    </section>
  );
}

/* ---------- effects browser ---------- */

const bins = [
  { name: "预设", star: true },
  { name: "Lumetri 预设", star: true },
  { name: "音频效果" },
  { name: "音频过渡" },
  { name: "视频效果" },
  { name: "视频过渡" },
];

function EffectsPanel() {
  return (
    <section className="flex w-[207px] shrink-0 flex-col bg-[#232323]">
      <div className="flex items-center pr-[4px] pl-[11px]">
        <Tab>信息</Tab>
        <Tab active className="ml-[41px] px-[2px]">效果<MenuLines className="ml-[10px]" /></Tab>
        <span className="ml-[22px] w-[21px] overflow-hidden"><Tab>标记</Tab></span>
        <IconButton label="更多面板" className="ml-auto text-[#b4b4b4]"><More /></IconButton>
      </div>
      <label className="mx-[5px] mt-[6px] flex h-[18px] w-[194px] items-center bg-[#151515] pl-[4px] text-[#b4b4b4]">
        <Magnifier />
        <input aria-label="搜索效果" className="ml-1 w-full bg-transparent text-[12px] outline-none" />
      </label>
      <ul className="mt-[5px] mr-[8px] ml-[5px] grow border border-[#2b2b2b]">
        {bins.map((b) => (
          <li key={b.name}>
            <button type="button" className="flex h-[20px] items-center pl-[3px] text-[13px] text-[#8f8f8f]">
              <Right />
              <span className="ml-[10px] w-[22px] text-[#b4b4b4]">{b.star ? <FolderStar className="mb-[3px]" /> : <Folder className="mb-px" />}</span>
              {b.star && b.name.startsWith("L") ? <><span className="text-[12px]">Lumetri</span>&nbsp;预设</> : b.name}
            </button>
          </li>
        ))}
      </ul>
      <div className="flex h-[16px] items-center justify-end gap-[12px] pr-[22px] text-[#b4b4b4]">
        <IconButton label="新建自定义素材箱"><Folder /></IconButton>
        <IconButton label="删除" className="text-[#4c4c4c]"><Trash className="h-[12px] w-[12px]" /></IconButton>
      </div>
    </section>
  );
}

/* ---------- tools ---------- */

const tools: { name: string; icon: React.ReactNode; corner?: boolean; on?: boolean }[] = [
  { name: "选择工具", icon: <Svg w={13} h={18}><path d="M0.5 0.5l12 10.500H6.500L0.5 17.500z" /></Svg> },
  {
    name: "向前选择轨道工具", corner: true,
    icon: <Svg w={18} h={12}><path d="M1 1h9v10H1z" fill="none" stroke="currentColor" strokeWidth="1.2" strokeDasharray="2 1.5" /><path d="M6 5h6V2.500l6 3.700-6 3.600V7.500H6z" /></Svg>,
  },
  { name: "波纹编辑工具", corner: true, icon: <Svg w={20} h={14}><path d="M9 0h2v14H9zM0 7l6-4.500v3h2.500v3H6v3zM20 7l-6-4.500v3h-2.500v3H14v3z" /></Svg> },
  {
    name: "剃刀工具",
    icon: <Svg w={17} h={16}><path d="M6 0.5l10.500 9.500-5.500 5.500L0.5 6z" /><path d="M4.500 5.500l3 .5 5 5" fill="none" stroke="#232323" strokeWidth="1.5" /></Svg>,
  },
  { name: "外滑工具", corner: true, icon: <Svg w={20} h={14}><path d="M0 0h1.500v14H0zM18.500 0H20v14h-1.500zM3 7l4-3.500v3h6v-3L17 7l-4 3.500v-3H7v3z" /></Svg> },
  { name: "钢笔工具", corner: true, icon: <Pen /> },
  {
    name: "手形工具", corner: true,
    icon: <Svg w={16} h={17}><path d="M0.5 7.500c1-1 2.200-.3 3.300 1.300L3 3c0-1.300 1.500-1.500 1.900-.2L6 7.500 6.300 1.200c.1-1.300 1.700-1.300 1.800 0L8.500 7.300 9.900 2c.4-1.300 1.900-.9 1.700.4L10.900 8l2.400-3.500c.8-1 2-.3 1.600.8-1.500 4-1.400 7-3.400 9.700-.6 1-1.500 1.500-3 1.500-3.500 0-5-1.500-8-9z" /></Svg>,
  },
  { name: "文字工具", corner: true, on: true, icon: <Svg w={15} h={15}><path d="M0.5 0.5h14v4.500h-1.300L12.500 2H8.700v11l2 .7v.8H4.300v-.8l2-.7V2H2.500L1.800 5H0.5z" /></Svg> },
];

function ToolsPanel() {
  return (
    <section className="flex w-[49px] shrink-0 flex-col items-center bg-[#232323] pt-[18px]">
      {tools.map((t) => (
        <button
          key={t.name}
          type="button"
          aria-label={t.name}
          className={"relative mb-[3px] flex h-[24px] w-[26px] items-center justify-center " + (t.on ? "bg-[#101216] text-[#5a9ae8] outline outline-[#2c2c2c]" : "text-[#b4b4b4]")}
        >
          {t.icon}
          {t.corner && <Svg w={4} h={4} className="absolute right-[-1px] bottom-[1px] text-[#9a9a9a]"><path d="M4 0v4H0z" /></Svg>}
        </button>
      ))}
    </section>
  );
}

/* ---------- timeline ---------- */

const nameBox = "flex h-full w-[32px] shrink-0 items-center justify-center text-[11px] ";

function Track({ name, audio, source, children }: { name: string; audio?: boolean; source?: boolean; children?: React.ReactNode }) {
  const on = audio || source;
  return (
    <div className="flex h-[25px] shrink-0">
      <div className="ml-[6px] flex w-[225px] shrink-0 items-center border-b border-[#2b2b2b] pl-[6px] text-[#b4b4b4]">
        <button type="button" aria-label="源修补" className={nameBox + (source ? "bg-[#0b5488] text-[#8fc0e8]" : "")}>{source ? "V1" : ""}</button>
        <IconButton label={"锁定 " + name} className="ml-[5px]"><Lock /></IconButton>
        <button type="button" className={nameBox + "ml-[6px] " + (on ? "bg-[#0b5488] text-[#8fc0e8]" : "text-[#9a9a9a]")}>{name}</button>
        <IconButton label={"同步锁定 " + name} className="ml-[8px]"><Sync /></IconButton>
        {audio ? (
          <>
            <button type="button" aria-label="静音" className="ml-[6px] w-[27px] text-[11px]">M</button>
            <button type="button" aria-label="独奏" className="w-[27px] text-[11px]">S</button>
            <IconButton label="画外音录制" className="w-[27px]"><Mic /></IconButton>
          </>
        ) : (
          <IconButton label={"切换轨道输出 " + name} className="ml-[6px] w-[27px]"><Eye /></IconButton>
        )}
      </div>
      <div className="ml-[6px] min-w-0 grow border-b border-[#303030] bg-[#1e1e1e]">{children}</div>
    </div>
  );
}

const marks = [":00:00", "00:00:05:00", "00:00:10:00", "00:00:15:00"];

function Timeline() {
  return (
    <section className="flex min-w-0 grow flex-col bg-[#232323]">
      <div className="flex h-[28px] items-center pl-[9px] text-[13px] text-[#c0c0c0]">
        <IconButton label="关闭序列" className="text-[#8f8f8f]"><Svg w={7} h={7} line><path d="M1 1l5 5M6 1L1 6" strokeWidth={1.2} /></Svg></IconButton>
        <span className="ml-[12px]">序列&nbsp;<Sm>02</Sm></span>
        <MenuLines className="ml-[11px]" />
      </div>
      <div className="flex grow">
        <div className="relative flex min-w-0 grow flex-col">
          <div className="flex h-[96px]">
            <div className="w-[237px] shrink-0 pl-[17px]">
              <div className="h-[24px] text-[16px] leading-[24px] font-medium text-[#3b86e0]">00:00:00:00</div>
              <div className="mt-[14px] flex h-[24px] items-center pl-[2px] text-[#3b86e0]">
                <IconButton label="嵌套" className="w-[17px]">
                  <Svg w={15} h={13} line><path d="M7.5 0v4M7.5 9v4M0 6.5h5M10 6.5h5M2.5 2l3 3M12.5 2l-3 3M2.5 11l3-3M12.5 11l-3-3" strokeWidth={1.4} /></Svg>
                </IconButton>
                <IconButton label="对齐" className="ml-[18px] w-[16px]">
                  <Svg w={12} h={13} line><path d="M2 12V6a4 4 0 018 0v6" strokeWidth={2.6} /></Svg>
                </IconButton>
                <IconButton label="链接选择项" className="ml-[18px] w-[16px]">
                  <Svg w={15} h={14}><path d="M0 0h6v2H0zM0 4h1.500v9H0zM2.500 4H6v1.500H4v2h2V9H4v2.500h2V13H2.500zM8 0h7v8l-3-1zM7 2l8 7-4 .5L7 13z" /></Svg>
                </IconButton>
                <IconButton label="添加标记" className="ml-[18px] w-[16px] text-[#c0c0c0]"><Svg w={8} h={11}><path d="M0 0h8v7l-4 4-4-4z" /></Svg></IconButton>
                <IconButton label="时间轴显示设置" className="ml-[18px] w-[16px] text-[#c0c0c0]"><Wrench /></IconButton>
              </div>
            </div>
            <div className="min-w-0 grow overflow-hidden">
              <div className="flex h-[44px] items-end">
                {marks.map((m, g) => (
                  <div key={m} className="relative grid h-[13px] w-[343px] shrink-0 grid-cols-10 items-end">
                    <span className={"absolute bottom-[15px] left-0 text-[11px] leading-[14px] text-[#9a9a9a] " + (g ? "-translate-x-1/2" : "")}>{m}</span>
                    {Array.from({ length: 10 }, (_, i) => (
                      <span key={i} className={(i ? "h-[5px]" : "h-[13px]") + " border-l border-[#505050]"} />
                    ))}
                  </div>
                ))}
              </div>
              <div className="flex h-[16px] w-[350px]">
                <div className="flex w-[341px] items-center justify-center border-b-2 border-l-2 border-b-[#e0e05c] border-l-[#1e1e1e] bg-[#827f7f]">
                  <Svg w={7} h={6}><path d="M0 0h1v6H0zM3 0h1v6H3zM6 0h1v6H6z" fill="#333" /></Svg>
                </div>
                <span className="mt-[1px] ml-[3px] h-[13px] w-[5px] rounded-tr-[4px] bg-[#3b86e0]" />
              </div>
            </div>
          </div>
          <div className="ml-[6px] flex"><div className="h-px w-[225px] bg-[#2b2b2b]" /><div className="ml-[6px] h-px grow bg-[#303030]" /></div>
          <Track name="V3" />
          <Track name="V2">
            <div className="flex h-[24px] w-[340px] items-start border-[3px] border-b-[4px] border-[#e8d9ec] bg-[#e083e2] pl-[7px] text-[9px] leading-[11px] text-[#220a2c]">
              <i className="mr-[7px] bg-[#9a86c8] px-[1px] font-['Noto_Sans'] text-[10px] font-semibold">fx</i>
              1fgdfgdfg2fbfghbfg
            </div>
          </Track>
          <Track name="V1" source>
            <div className="flex h-[24px] w-[340px] items-start bg-[#e083e2] pt-[2px] pl-[10px] text-[11px] leading-[12px] text-[#220a2c]">
              <i className="mr-[7px] bg-[#5a5a5a] px-[1px] font-['Noto_Sans'] text-[10px] leading-[11px] font-semibold text-[#111]">fx</i>
              颜色遮罩
            </div>
          </Track>
          <div className="flex h-[4px]"><div className="ml-[237px] grow border-b border-[#303030]" /></div>
          <Track name="A1" audio />
          <Track name="A2" audio />
          <Track name="A3" audio />
          <Track name="A4" audio />
          <div className="flex h-[12px] shrink-0 overflow-hidden">
            <div className="ml-[6px] flex w-[225px] shrink-0 items-start pl-[43px] text-[#9a9a9a]">
              <Lock className="mt-[5px]" />
              <span className="ml-[10px] text-[13px] leading-[20px]">主声道</span>
              <span className="ml-[37px] text-[11px] leading-[24px]">0.0</span>
              <Svg w={11} h={9} className="mt-[3px] mr-[4px] ml-auto text-[#c0c0c0]"><path d="M0 0l4.500 4.500L0 9zM11 0L6.500 4.500 11 9zM5 0h1v9H5z" /></Svg>
            </div>
            <div className="ml-[6px] grow bg-[#1e1e1e]" />
          </div>
          <div className="flex h-[11px] border-y border-[#2e2e2e]">
            <div className="ml-[13px] flex h-[9px] w-[155px] items-center justify-between bg-[#303030]"><Knob /><Knob /></div>
            <div className="grow bg-[#1e1e1e]" />
          </div>
          <div className="pointer-events-none absolute top-[31px] bottom-[13px] left-[236px] w-px bg-[#6f9fd8]">
            <Svg w={7} h={13} className="text-[#4488e0]"><path d="M0 0h6.500v8l-4 4.500H0z" /></Svg>
          </div>
        </div>
        <div className="flex w-[24px] shrink-0 flex-col items-start pt-[63px] pl-px">
          <div className="flex h-[107px] w-[9px] flex-col items-center justify-between bg-[#303030]"><Knob /><Knob /></div>
          <div className="mt-[6px] flex h-[109px] w-[9px] flex-col items-center justify-between bg-[#303030]"><Knob /><Knob /></div>
        </div>
      </div>
      <div className="h-[10px]" />
    </section>
  );
}

/* ---------- audio meters ---------- */

const levels = ["0", "-6", "-12", "-18", "-24", "-30", "-36", "-42", "-48", "-54", "dB"];

function Meters() {
  return (
    <section className="flex w-[108px] shrink-0 flex-col bg-[#232323] pt-[26px] pl-[12px]">
      <div className="flex h-[280px]">
        <div className="flex w-[61px] flex-col border border-black bg-[#1e1e1e]">
          <div className="grid h-[10px] grid-cols-2 border-b border-black"><span className="mb-px border-r border-black" /></div>
          <div className="mt-auto mb-px grid h-px grid-cols-2 gap-px"><span className="bg-[#dede60]" /><span className="bg-[#dede60]" /></div>
        </div>
        <Svg w={5} h={280} className="text-[#6a6a6a]">
          {Array.from({ length: 61 }, (_, i) => (
            <rect key={i} x="0" y={Math.round(11 + i * 4.445)} width={i % 6 === 0 ? 4 : 2} height="1" />
          ))}
        </Svg>
        <div className="mt-[4px] ml-[2px] flex h-[278px] flex-col justify-between text-[11px] leading-[12px] text-[#8f8f8f]">
          {levels.map((l) => <span key={l}>{l}</span>)}
        </div>
      </div>
      <div className="mt-[4px] flex gap-[14px] pl-[6px]">
        {["左", "右"].map((c) => (
          <button key={c} type="button" aria-label={"独奏" + c + "声道"} className="size-[16px] bg-[#1c1c1c] text-[11px] leading-[16px] text-[#c0c0c0]">S</button>
        ))}
      </div>
    </section>
  );
}

export default function App() {
  return (
    <div className="min-h-screen bg-white font-['Noto_Sans_CJK_SC','Noto_Sans',sans-serif]">
      <TitleBar />
      <main className="bg-[#161616] pt-px pl-[2px]">
        <div className="grid grid-cols-[615fr_498fr_797fr] gap-x-[4px]">
          <ProjectPanel />
          <EffectControls />
          <ProgramMonitor />
        </div>
        <div className="mt-[5px] flex gap-[4px]">
          <EffectsPanel />
          <ToolsPanel />
          <Timeline />
          <Meters />
        </div>
      </main>
    </div>
  );
}
